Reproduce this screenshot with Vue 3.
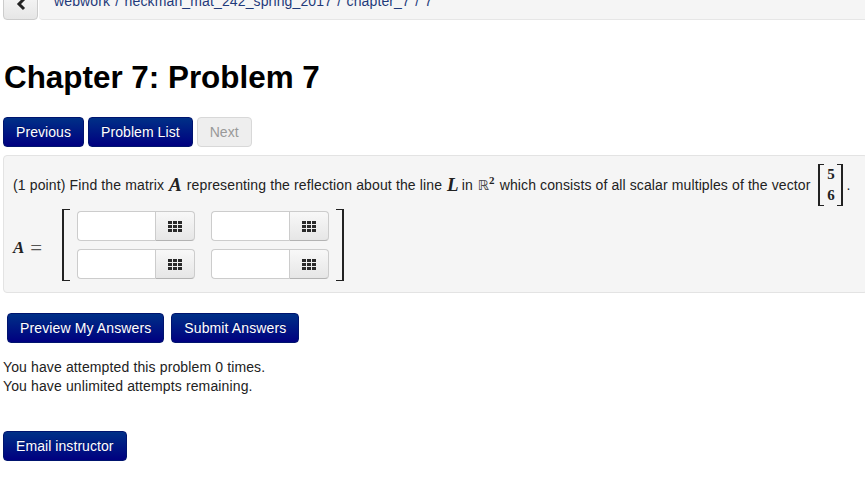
<script setup>
const cells = [0, 1, 2, 3]
const dots = Array.from({ length: 9 })
</script>

<template>
  <div class="page">
    <nav class="topbar">
      <button class="back" aria-label="Back">
        <svg width="10" height="12" viewBox="0 0 10 12"><path d="M8 0 3 5l5 5" fill="none" stroke="#222" stroke-width="3"/></svg>
      </button>
      <div class="crumbs">webwork / heckman_mat_242_spring_2017 / chapter_7 / 7</div>
    </nav>

    <h1>Chapter 7: Problem 7</h1>

    <div class="nav-buttons">
      <a class="btn">Previous</a>
      <a class="btn">Problem List</a>
      <a class="btn disabled">Next</a>
    </div>

    <section class="well">
      <p class="statement">
        <span>(1 point) Find the matrix</span>
        <i class="mi big">A</i>
        <span>representing the reflection about the line</span>
        <i class="mi big tight">L</i>
        <span>in</span>
        <span class="reals">ℝ<sup>2</sup></span>
        <span class="tail">which consists of all scalar multiples of the vector</span>
        <span class="vector"><b>5</b><b>6</b></span>
        <span class="dot">.</span>
      </p>
      <div class="answer">
        <div class="lhs"><i class="mi">A</i><span class="eq">=</span></div>
        <div class="matrix">
          <div v-for="c in cells" :key="c" class="group">
            <input class="field" type="text" />
            <span class="addon">
              <span class="grid-icon"><span v-for="(d, i) in dots" :key="i"></span></span>
            </span>
          </div>
        </div>
      </div>
    </section>

    <div class="submit-row">
      <a class="btn">Preview My Answers</a>
      <a class="btn">Submit Answers</a>
    </div>

    <p class="attempts">You have attempted this problem 0 times.<br />You have unlimited attempts remaining.</p>

    <a class="btn email">Email instructor</a>
  </div>
</template>

<style scoped>
.page {
  width: 865px;
  height: 486px;
  overflow: hidden;
  padding-left: 3px;
  box-sizing: border-box;
  font-family: "Liberation Sans", Arial, sans-serif;
  font-size: 14px;
  letter-spacing: 0.13px;
  color: #222;
}
.topbar {
  display: flex;
  gap: 1px;
  height: 40px;
  margin-top: -20px;
}
.back {
  width: 35px;
  height: 40px;
  padding: 10px 0 0;
  border: 1px solid #ccc;
  border-radius: 4px;
  background: linear-gradient(#fff, #e6e6e6);
  display: flex;
  align-items: center;
  justify-content: center;
}
.crumbs {
  flex: 1;
  margin-right: -3px;
  padding-left: 15px;
  background: #f5f5f5;
  border-radius: 4px;
  border-bottom: 1px solid #e6e6e6;
  color: #1f3a7a;
  line-height: 42px;
  word-spacing: 1.2px;
}
h1 {
  margin: 38px 0 0 1px;
  font-size: 31.4px;
  line-height: 40px;
  font-weight: 700;
  letter-spacing: 0;
  color: #000;
}
.btn {
  display: block;
  box-sizing: border-box;
  height: 30px;
  line-height: 28px;
  padding: 0 12px;
  border: 1px solid #00146e;
  border-radius: 4px;
  background: linear-gradient(#003087, #000080);
  color: #fff;
  letter-spacing: 0.07px;
  text-shadow: 0 -1px 0 rgba(0,0,0,.25);
}
.btn.disabled {
  background: #eee;
  border-color: #d8d8d8;
  color: #999;
  text-shadow: none;
}
.nav-buttons {
  display: flex;
  gap: 4px;
  margin-top: 19px;
}
.well {
  box-sizing: border-box;
  height: 138px;
  margin: 8px -3px 0 0;
  padding: 8px 9px 0;
  background: #f5f5f5;
  border: 1px solid #e3e3e3;
  border-radius: 4px;
}
.statement {
  display: flex;
  align-items: center;
  height: 42px;
  margin: 0;
  white-space: nowrap;
}
.mi {
  font-family: "Liberation Serif", serif;
  font-weight: 700;
  font-style: italic;
  font-size: 17px;
  letter-spacing: 0;
  color: #222;
}
.big { margin: 0 5px; font-size: 19px; }
.tight { margin-right: 3px; }
.reals {
  margin: 0 5px 0 5px;
  font-family: "DejaVu Sans", sans-serif;
  font-size: 14px;
  color: #444;
}
.reals sup {
  font-family: "Liberation Serif", serif;
  font-weight: 700;
  font-size: 11px;
  line-height: 0;
  vertical-align: 6px;
  color: #222;
}
.tail { letter-spacing: 0.11px; }
.vector {
  display: flex;
  flex-direction: column;
  justify-content: space-between;
  box-sizing: border-box;
  width: 25px;
  height: 42px;
  margin-left: 8px;
  padding: 1px 0;
  position: relative;
  align-items: center;
  border-left: 2px solid #222;
  border-right: 2px solid #222;
  font-family: "Liberation Serif", serif;
  font-size: 15px;
  line-height: 19px;
}
.vector::before, .vector::after {
  content: "";
  position: absolute;
  left: 0;
  right: 0;
  height: 1px;
  background: linear-gradient(to right, #222 4px, transparent 4px, transparent 17px, #222 17px);
}
.vector::before { top: 0; }
.vector::after { bottom: 0; }
.dot { margin-left: 3px; }
.answer {
  display: flex;
  align-items: center;
  margin-top: 3px;
}
.lhs {
  display: flex;
  align-items: center;
  gap: 6px;
  width: 49px;
  padding-top: 6px;
}
.eq {
  font-family: "Liberation Serif", serif;
  font-size: 21px;
  line-height: 20px;
  color: #555;
}
.matrix {
  box-sizing: border-box;
  position: relative;
  display: grid;
  grid-template-columns: 118px 118px;
  column-gap: 16px;
  row-gap: 8px;
  padding: 2px 15px;
  width: 282px;
}
.matrix::before, .matrix::after {
  content: "";
  position: absolute;
  top: 0;
  bottom: 0;
  width: 6px;
  border: 1px solid #222;
}
.matrix::before { left: 0; border-right: 0; border-left-width: 2px; }
.matrix::after { right: 0; border-left: 0; border-right-width: 2px; }
.group {
  display: flex;
  height: 30px;
}
.field {
  box-sizing: border-box;
  width: 78px;
  height: 30px;
  padding: 0 6px;
  background: #fff;
  border: 1px solid #ccc;
  border-right: 0;
  border-radius: 4px 0 0 4px;
  outline: none;
}
.addon {
  box-sizing: border-box;
  width: 40px;
  height: 30px;
  display: flex;
  align-items: center;
  justify-content: center;
  background: linear-gradient(#f8f8f8, #e6e6e6);
  border: 1px solid #ccc;
  border-bottom-color: #b3b3b3;
  border-radius: 0 4px 4px 0;
}
.grid-icon {
  display: grid;
  grid-template-columns: repeat(3, 4px);
  grid-auto-rows: 3px;
  gap: 1px;
}
.grid-icon span { background: #2a2a2a; }
.submit-row {
  display: flex;
  gap: 7px;
  margin: 20px 0 0 4px;
}
.submit-row .btn { letter-spacing: 0.12px; }
.attempts {
  margin: 15px 0 0;
  line-height: 19px;
  font-size: 14px;
}
.email {
  display: inline-block;
  margin-top: 35px;
}
</style>
